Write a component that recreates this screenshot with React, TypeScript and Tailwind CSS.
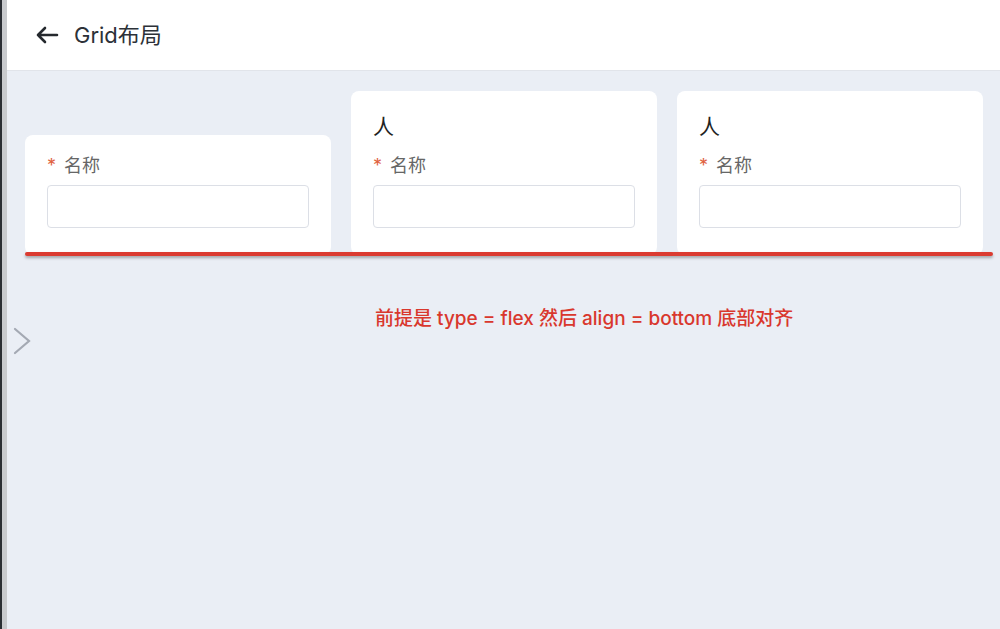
const font = { fontFamily: 'Inter, "Noto Sans CJK SC", sans-serif' };

function Field({ title }: { title?: string }) {
  return (
    <div className="w-[306px] shrink-0 rounded-lg bg-white px-[22px] pt-[18px] pb-[27px]">
      {title && <div className="mb-[8px] text-[21px] leading-[36px] text-[#222]">{title}</div>}
      <div className="flex items-center text-[18px] leading-[26px] text-[#666]">
        <span className="mr-[8px] text-[#e0623f]">*</span>
        名称
      </div>
      <div className="mt-[6px] h-[43px] rounded border border-[#dcdfe6] bg-white" />
    </div>
  );
}

export default function App() {
  return (
    <div style={font} className="relative flex h-[629px] w-[1000px] overflow-hidden bg-[#eaeef5]">
      <div className="w-[2px] shrink-0 bg-[#2a2e33]" />
      <div className="w-[5px] shrink-0 bg-[#c8cacd]" />
      <div className="relative flex min-w-0 flex-1 flex-col">
        <div className="flex h-[71px] items-center border-b border-[#e1e4ea] bg-white pl-[28px]">
          <svg width="24" height="20" viewBox="0 0 24 20" fill="none" stroke="#25292e" strokeWidth="2.6" strokeLinecap="round" strokeLinejoin="round">
            <path d="M22 10H3M10 3L3 10L10 17" />
          </svg>
          <span className="ml-[15px] text-[22px] text-[#2c3138]">Grid布局</span>
        </div>
        <div className="relative flex items-end gap-5 pl-[18px] pt-[20px]">
          <Field />
          <Field title="人" />
          <Field title="人" />
          <div className="absolute left-[18px] top-[181px] h-[4px] w-[968px] rounded-full bg-[#db3b31] shadow-[0_2px_3px_rgba(0,0,0,0.3)]" />
        </div>
        <div className="mt-[51px] pl-[368px] text-[19px] leading-[26px] font-medium text-[#d9372d]">
          前提是 type = flex 然后 align = bottom 底部对齐
        </div>
        <svg className="absolute left-[5px] top-[327px]" width="20" height="28" viewBox="0 0 20 28" fill="none" stroke="#a4a9b3" strokeWidth="2.2" strokeLinecap="round">
          <path d="M3 2L17 14L3 26" />
        </svg>
      </div>
    </div>
  );
}
